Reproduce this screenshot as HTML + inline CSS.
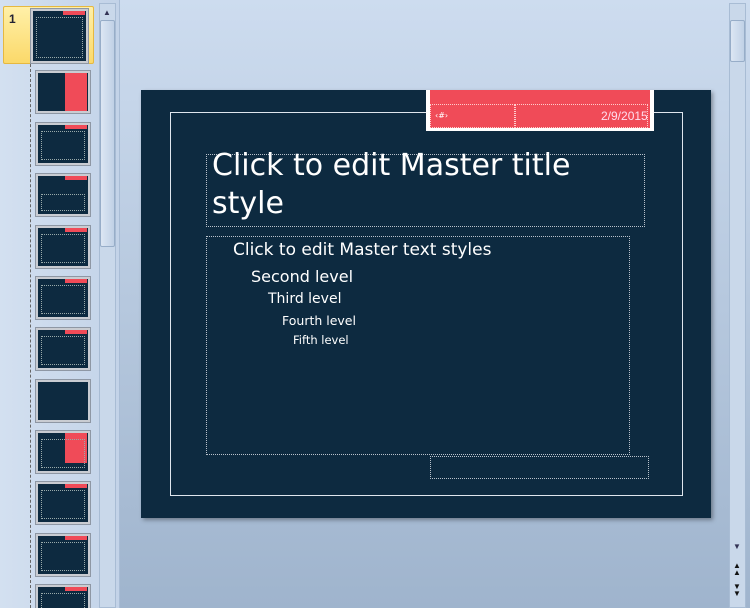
<!DOCTYPE html>
<html style="width:750px;height:608px;overflow:hidden"><head><style>
*{margin:0;padding:0;box-sizing:border-box}
body{width:750px;height:608px;position:relative;overflow:hidden;font-family:"Liberation Sans",sans-serif;background:linear-gradient(#cddcef,#9fb4cd)}
.a{position:absolute}
.left{left:0;top:0;width:120px;height:608px;background:linear-gradient(90deg,#d3e0f0,#c3d3e8);border-right:1px solid #a9bdd6}
.th{position:absolute;left:36px;width:54px;height:42px;background:#0d2a40;border:2px solid #c9ccd2;box-shadow:0 0 0 1px #8e97a4}
.th i{position:absolute;right:1px;top:0;width:22px;height:4px;background:#f04b58}
.th b{position:absolute;left:3px;top:6px;right:3px;bottom:3px;border:1px dotted #9aa}
.sb{background:#c9d8ea;border:1px solid #a8bcd4}
.dl{border:1px dotted #b9c2cc}
.t{color:#fff;white-space:nowrap;font-family:"DejaVu Sans","Liberation Sans",sans-serif}
</style></head><body>
<div class="a left"></div>
<div class="a" style="left:3px;top:6px;width:91px;height:58px;background:linear-gradient(#fff0a8,#fbd96a);border:1px solid #e6b840;border-radius:2px"></div>
<div class="a" style="left:9px;top:12px;font-weight:bold;font-size:12px;color:#223">1</div>
<div class="a" style="left:30px;top:64px;width:0;height:544px;border-left:1px dashed #666"></div>
<div class="th" style="top:9px;width:57px;height:54px;left:31px"><i></i><b></b></div>
<div class="th" style="top:71px"><i style="height:38px;background:#f04b58"></i></div>
<div class="th" style="top:123px"><i></i><b></b></div>
<div class="th" style="top:174px"><i></i><b style="top:18px"></b></div>
<div class="th" style="top:226px"><i></i><b></b></div>
<div class="th" style="top:277px"><i></i><b></b></div>
<div class="th" style="top:328px"><i></i><b></b></div>
<div class="th" style="top:380px"></div>
<div class="th" style="top:431px"><i style="height:30px"></i><b></b></div>
<div class="th" style="top:482px"><i></i><b></b></div>
<div class="th" style="top:534px"><i></i><b></b></div>
<div class="th" style="top:585px;height:23px;border-bottom:none"><i></i><b style="bottom:0;border-bottom:none"></b></div>
<div class="a sb" style="left:99px;top:3px;width:17px;height:605px"></div>
<div class="a" style="left:103px;top:8px;font-size:8px;color:#335">▲</div>
<div class="a" style="left:100px;top:20px;width:15px;height:227px;background:linear-gradient(90deg,#dce6f3,#c0d1e6);border:1px solid #97adc8;border-radius:2px"></div>
<div class="a sb" style="left:729px;top:3px;width:17px;height:605px"></div>
<div class="a" style="left:730px;top:20px;width:15px;height:42px;background:linear-gradient(90deg,#dce6f3,#c0d1e6);border:1px solid #97adc8;border-radius:2px"></div>
<div class="a" style="left:733px;top:542px;font-size:8px;color:#335">▼</div>
<div class="a" style="left:733px;top:562px;font-size:8px;color:#111;line-height:7px">▲<br>▲<br><br>▼<br>▼</div>
<div class="a" style="left:141px;top:90px;width:570px;height:428px;background:#0d2a40;box-shadow:2px 2px 4px rgba(0,0,0,.35)"></div>
<div class="a" style="left:170px;top:112px;width:513px;height:384px;border:1px solid #dfe6ee"></div>
<div class="a" style="left:426px;top:90px;width:228px;height:41px;background:#fff"></div>
<div class="a" style="left:430px;top:90px;width:220px;height:38px;background:#f04b58"></div>
<div class="a dl" style="left:430px;top:104px;width:85px;height:24px;border-color:#fcc"></div>
<div class="a dl" style="left:515px;top:104px;width:133px;height:24px;border-color:#fcc"></div>
<div class="a t" style="left:435px;top:111px;font-size:8px">‹#›</div>
<div class="a t" style="left:601px;top:109px;font-size:10px;color:#fde;font-family:'Liberation Sans',sans-serif;font-size:12px">2/9/2015</div>
<div class="a dl" style="left:206px;top:154px;width:439px;height:73px"></div>
<div class="a t" style="left:212px;top:147px;font-size:30px;line-height:38px">Click to edit Master title<br>style</div>
<div class="a dl" style="left:206px;top:236px;width:424px;height:219px"></div>
<div class="a t" style="left:233px;top:240px;font-size:17px">Click to edit Master text styles</div>
<div class="a t" style="left:251px;top:267px;font-size:16px">Second level</div>
<div class="a t" style="left:268px;top:291px;font-size:14px">Third level</div>
<div class="a t" style="left:282px;top:313px;font-size:12.5px">Fourth level</div>
<div class="a t" style="left:293px;top:333px;font-size:11.5px">Fifth level</div>
<div class="a dl" style="left:430px;top:456px;width:219px;height:23px"></div>
</body></html>
